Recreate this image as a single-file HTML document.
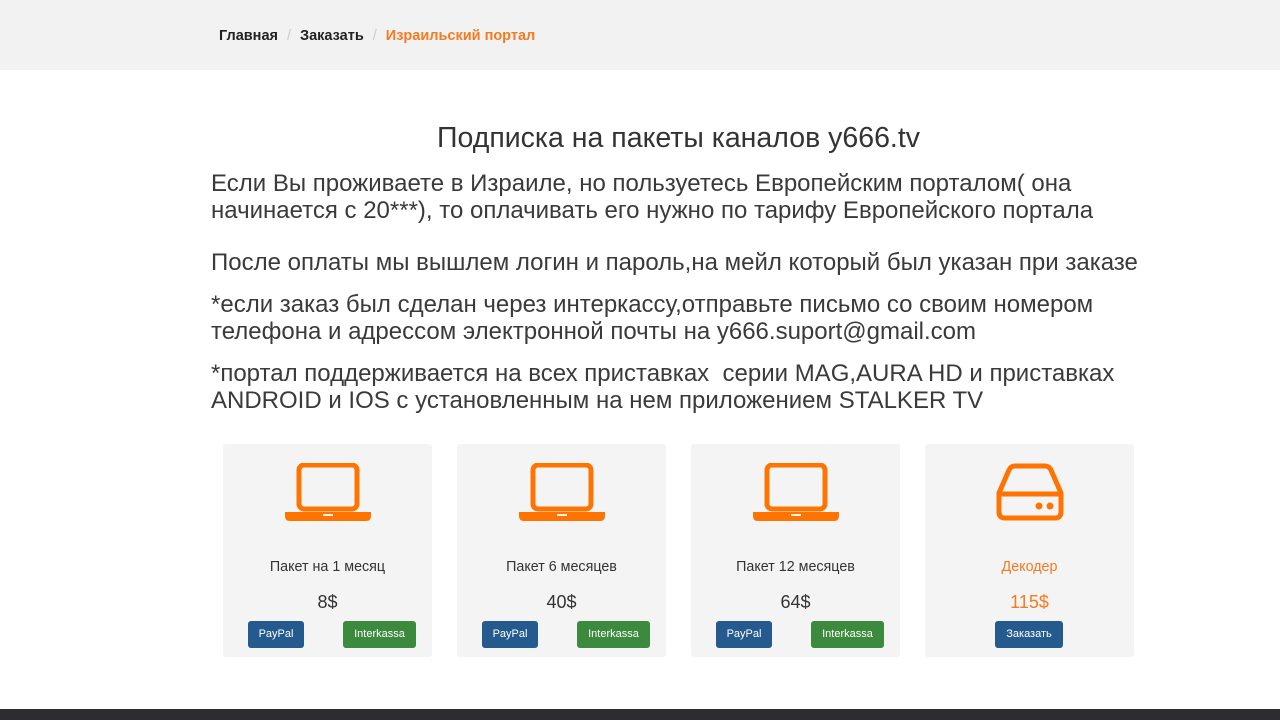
<!DOCTYPE html>
<html><head><meta charset="utf-8"><style>
body{margin:0;width:1280px;height:720px;overflow:hidden;background:#fff;font-family:"Liberation Sans",sans-serif;color:#333;position:relative}
.top{position:absolute;left:0;top:0;width:1280px;height:70px;background:#f2f2f2}
.bc{position:absolute;left:219px;top:28px;font-size:14.5px;font-weight:bold;color:#222}
.bc .s{color:#ccc;font-weight:normal;margin:0 9px}
.bc .a{color:#f47b20}
h1{position:absolute;left:0;width:1357px;top:122px;margin:0;text-align:center;font-weight:normal;font-size:28.5px}
.p{position:absolute;left:211px;font-size:24px;line-height:26.5px;white-space:nowrap;color:#3a3a3a}
.card{position:absolute;top:444px;width:209px;height:213px;background:#f4f4f5;border-radius:3px;text-align:center}
.card svg{position:absolute;left:62px;top:19px}
.nm{position:absolute;top:115px;width:100%;font-size:14.3px;color:#333}
.pr{position:absolute;top:148px;width:100%;font-size:18px;color:#333}
.btn{position:absolute;top:177px;height:27px;line-height:27px;font-size:11px;color:#fff;border-radius:3px}
.pp{background:#245a8d;left:25px;width:56px}
.ik{background:#3b8a3d;left:120px;width:73px}
.or{color:#f47b20}
.foot{position:absolute;left:0;top:709px;width:1280px;height:11px;background:#2d2d2f}
</style></head><body>
<div class="top"></div>
<div class="bc">Главная<span class="s">/</span>Заказать<span class="s">/</span><span class="a">Израильский портал</span></div>
<h1>Подписка на пакеты каналов y666.tv</h1>
<div class="p" style="top:171px">Если Вы проживаете в Израиле, но пользуетесь Европейским порталом( она<br>начинается с 20***), то оплачивать его нужно по тарифу Европейского портала</div>
<div class="p" style="top:250px">После оплаты мы вышлем логин и пароль,на мейл который был указан при заказе</div>
<div class="p" style="top:292px">*если заказ был сделан через интеркассу,отправьте письмо со своим номером<br>телефона и адрессом электронной почты на y666.suport@gmail.com</div>
<div class="p" style="top:361px">*портал поддерживается на всех приставках&nbsp; серии MAG,AURA HD и приставках<br>ANDROID и IOS с установленным на нем приложением STALKER TV</div>

<div class="card" style="left:223px">
<svg width="86" height="58" viewBox="0 0 86 58"><rect x="14" y="2" width="58" height="44" rx="5" fill="none" stroke="#ff7400" stroke-width="5"/><path d="M0 49H86V53Q86 58 81 58H5Q0 58 0 53Z" fill="#ff7400"/><rect x="38" y="51" width="10" height="2" fill="#f4f4f5"/></svg>
<div class="nm">Пакет на 1 месяц</div><div class="pr">8$</div>
<div class="btn pp">PayPal</div><div class="btn ik">Interkassa</div></div>
<div class="card" style="left:457px">
<svg width="86" height="58" viewBox="0 0 86 58"><rect x="14" y="2" width="58" height="44" rx="5" fill="none" stroke="#ff7400" stroke-width="5"/><path d="M0 49H86V53Q86 58 81 58H5Q0 58 0 53Z" fill="#ff7400"/><rect x="38" y="51" width="10" height="2" fill="#f4f4f5"/></svg>
<div class="nm">Пакет 6 месяцев</div><div class="pr">40$</div>
<div class="btn pp">PayPal</div><div class="btn ik">Interkassa</div></div>
<div class="card" style="left:691px">
<svg width="86" height="58" viewBox="0 0 86 58"><rect x="14" y="2" width="58" height="44" rx="5" fill="none" stroke="#ff7400" stroke-width="5"/><path d="M0 49H86V53Q86 58 81 58H5Q0 58 0 53Z" fill="#ff7400"/><rect x="38" y="51" width="10" height="2" fill="#f4f4f5"/></svg>
<div class="nm">Пакет 12 месяцев</div><div class="pr">64$</div>
<div class="btn pp">PayPal</div><div class="btn ik">Interkassa</div></div>
<div class="card" style="left:925px">
<svg width="70" height="58" viewBox="0 0 70 58" style="left:70px"><path d="M4 30L14 7Q16 3 20 3H50Q54 3 56 7L66 30V49Q66 55 60 55H10Q4 55 4 49Z" fill="none" stroke="#ff7400" stroke-width="5" stroke-linejoin="round"/><path d="M4 31H66" stroke="#ff7400" stroke-width="5"/><circle cx="44" cy="43" r="3.5" fill="#ff7400"/><circle cx="55" cy="43" r="3.5" fill="#ff7400"/></svg>
<div class="nm or">Декодер</div><div class="pr or">115$</div>
<div class="btn pp" style="left:70px;width:68px">Заказать</div></div>
<div class="foot"></div>
</body></html>
